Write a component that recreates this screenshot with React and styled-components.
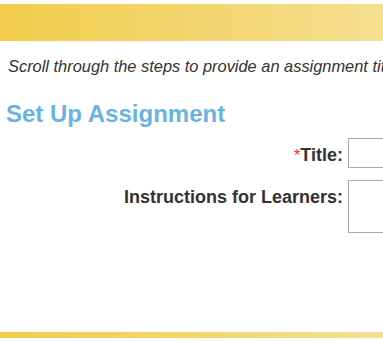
import React from "react";
import styled, { createGlobalStyle } from "styled-components";

const GlobalStyle = createGlobalStyle`
  html, body {
    margin: 0;
    padding: 0;
    background: #fff;
    overflow: hidden;
  }
  body {
    font-family: "Liberation Sans", Arial, sans-serif;
    color: #333;
  }
`;

const Page = styled.div`
  display: flex;
  flex-direction: column;
  height: 341px;
  width: 383px;
  overflow: hidden;
`;

const Band = styled.div`
  flex: none;
  height: ${props => props.$height}px;
  margin-top: ${props => props.$top || 0}px;
  margin-bottom: ${props => props.$bottom || 0}px;
  background: linear-gradient(to right, #f2cd4b 0%, #f3d46a 45%, #f5df90 100%);
`;

const Intro = styled.p`
  margin: 16px 0 0 8px;
  font-size: 16.4px;
  font-style: italic;
  line-height: 19px;
  white-space: nowrap;
  color: #333;
`;

const Heading = styled.h2`
  margin: 24px 0 0 6px;
  font-size: 24px;
  font-weight: bold;
  line-height: 28px;
  color: #6ab3e1;
  white-space: nowrap;
`;

const Form = styled.div`
  display: grid;
  grid-template-columns: 343px 250px;
  column-gap: 5px;
  row-gap: 12px;
  margin-top: 10px;
`;

const Label = styled.label`
  padding-top: 7px;
  font-size: 18px;
  font-weight: bold;
  line-height: 21px;
  text-align: right;
  color: #333;
  white-space: nowrap;
`;

const Required = styled.span`
  color: #ff1a1a;
  font-weight: normal;
  font-size: 16px;
`;

const Field = styled.div`
  box-sizing: border-box;
  height: ${props => props.$height}px;
  border: 1px solid #aaa;
  background: #fff;
`;

const Spacer = styled.div`
  flex: 1;
`;

export default function App() {
  return (
    <>
      <GlobalStyle />
      <Page>
        <Band $height={37} $top={4} />
        <Intro>
          Scroll through the steps to provide an assignment title and instructions
        </Intro>
        <Heading>Set Up Assignment</Heading>
        <Form>
          <Label>
            <Required>*</Required>Title:
          </Label>
          <Field $height={30} />
          <Label>Instructions for Learners:</Label>
          <Field $height={53} />
        </Form>
        <Spacer />
        <Band $height={6} $bottom={3} />
      </Page>
    </>
  );
}
